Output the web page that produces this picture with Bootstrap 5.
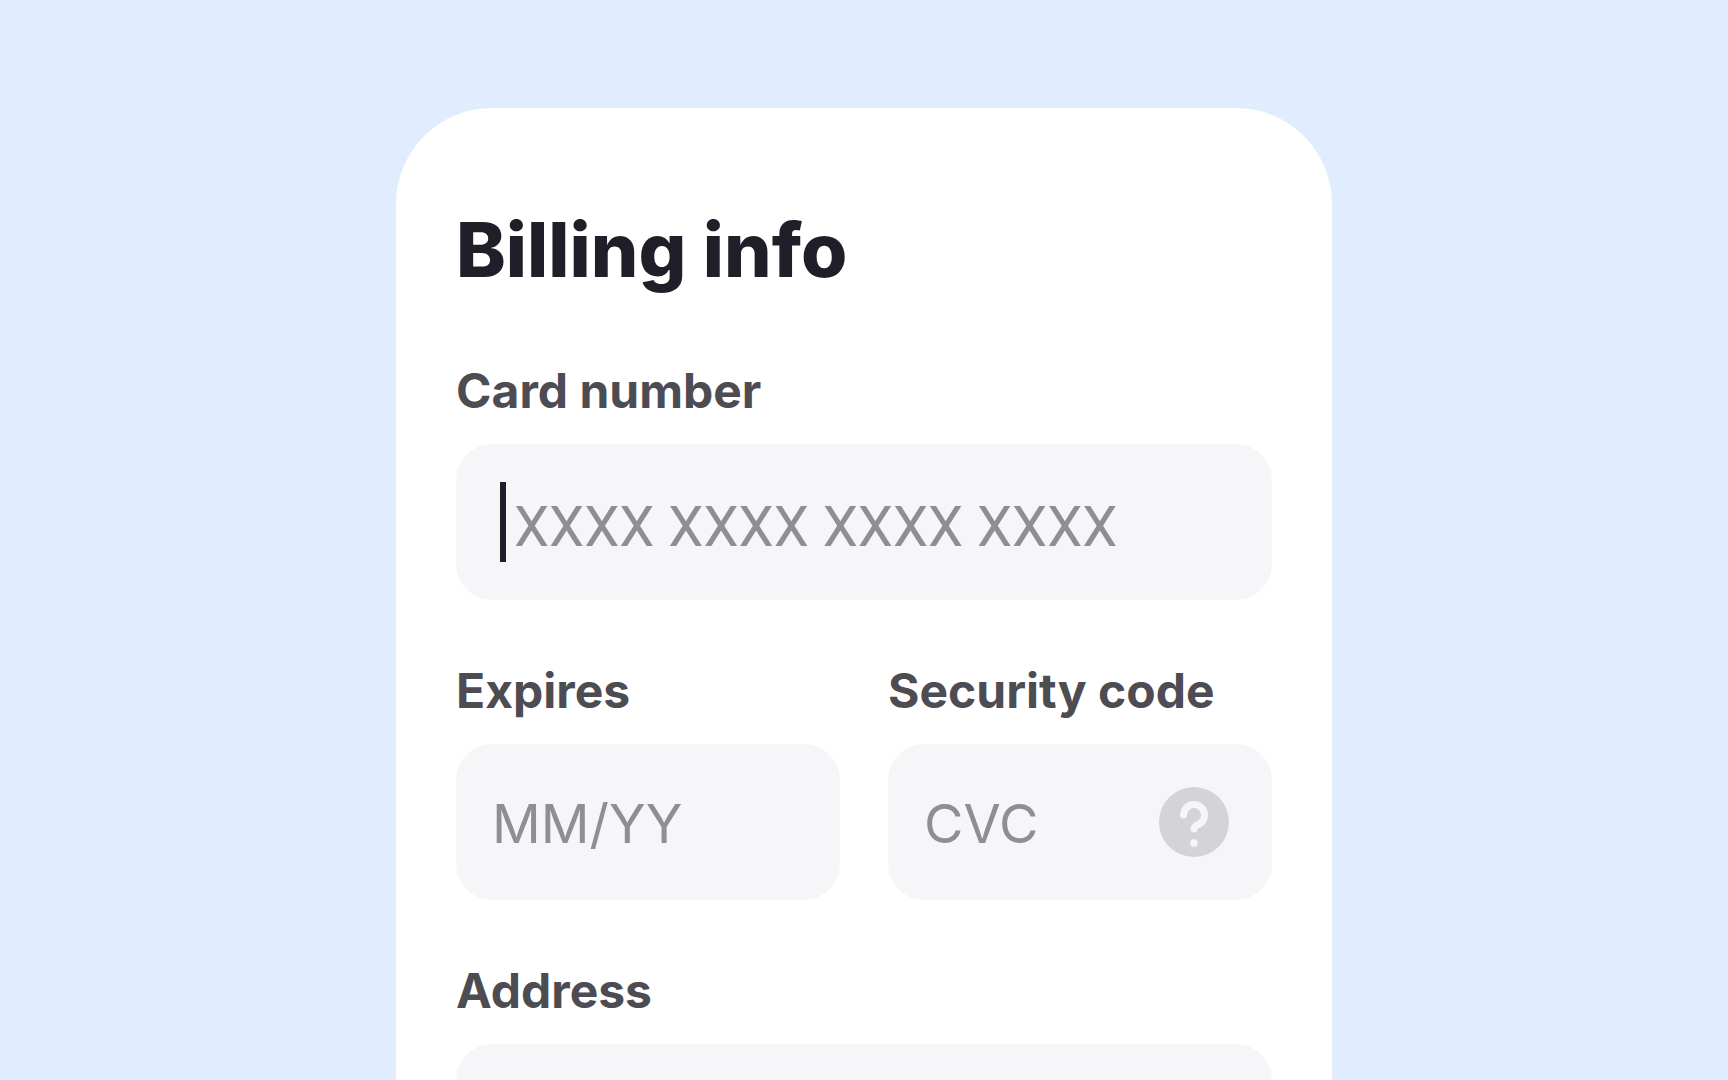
<!DOCTYPE html>
<html lang="en">
<head>
<meta charset="utf-8">
<meta name="viewport" content="width=device-width, initial-scale=1">
<title>Billing info</title>
<link href="https://cdn.jsdelivr.net/npm/bootstrap@5.3.0/dist/css/bootstrap.min.css" rel="stylesheet">
<style>
  body { background: #dfedff; font-family: Inter, "Liberation Sans", sans-serif; height: 100vh; }
  .billing-panel { max-width: 936px; margin-top: 108px; padding: 96px 60px; border-radius: 96px; }
  .billing-title { color: #1f1f29; font-size: 75px; line-height: 92px; font-weight: 800; margin-bottom: 65px; }
  .billing-grid { --bs-gutter-x: 48px; --bs-gutter-y: 61px; }
  .field-label { color: #4c4c52; font-size: 48px; line-height: 60px; font-weight: 700; margin-bottom: 23px; }
  .field-box { height: 156px; padding: 0 43px 0 36px; border-radius: 36px; background: #f6f6f8; }
  .field-box .form-control { font-size: 54px; line-height: 80px; font-weight: 400; color: #1f1f29; padding: 3px 0 0; }
  .field-box .form-control::placeholder { color: #8e8e93; opacity: 1; }
  .field-active { padding: 0 44px; }
  .field-active .form-control { font-family: Roboto, Inter, sans-serif; font-size: 56px; padding: 9px 0 0 8px; }
  .text-caret { width: 6px; height: 80px; background: #1f1f29; }
  .help-icon { width: 70px; height: 70px; }
</style>
<script src="https://cdn.jsdelivr.net/npm/bootstrap@5.3.0/dist/js/bootstrap.bundle.min.js" defer></script>
</head>
<body class="overflow-hidden">
<main class="billing-panel bg-white mx-auto">
  <h1 class="billing-title">Billing info</h1>
  <form class="row billing-grid">
    <div class="col-12">
      <label class="field-label d-block" for="card-number">Card number</label>
      <div class="field-box field-active d-flex align-items-center">
        <span class="text-caret flex-shrink-0" aria-hidden="true"></span>
        <input class="form-control border-0 bg-transparent shadow-none" id="card-number" type="text" inputmode="numeric" placeholder="XXXX XXXX XXXX XXXX">
      </div>
    </div>
    <div class="col-6">
      <label class="field-label d-block" for="expires">Expires</label>
      <div class="field-box d-flex align-items-center">
        <input class="form-control border-0 bg-transparent shadow-none" id="expires" type="text" placeholder="MM/YY">
      </div>
    </div>
    <div class="col-6">
      <label class="field-label d-block text-nowrap" for="cvc">Security code</label>
      <div class="field-box d-flex align-items-center">
        <input class="form-control border-0 bg-transparent shadow-none" id="cvc" type="text" placeholder="CVC">
        <button class="btn p-0 border-0 d-flex flex-shrink-0" type="button" aria-label="Security code help">
          <svg class="help-icon" viewBox="0 0 70 70" fill="none" aria-hidden="true">
            <circle cx="35" cy="35" r="35" fill="#d4d4d6"/>
            <path d="M24.5 28a10.5 10.5 0 1 1 14.3 9.8C36.4 38.7 35 40 35 42" stroke="#f6f6f8" stroke-width="7" stroke-linecap="round" stroke-linejoin="round"/>
            <circle cx="35" cy="56" r="3.8" fill="#f6f6f8"/>
          </svg>
        </button>
      </div>
    </div>
    <div class="col-12">
      <label class="field-label d-block" for="address">Address</label>
      <div class="field-box d-flex align-items-center">
        <input class="form-control border-0 bg-transparent shadow-none" id="address" type="text">
      </div>
    </div>
  </form>
</main>
</body>
</html>
